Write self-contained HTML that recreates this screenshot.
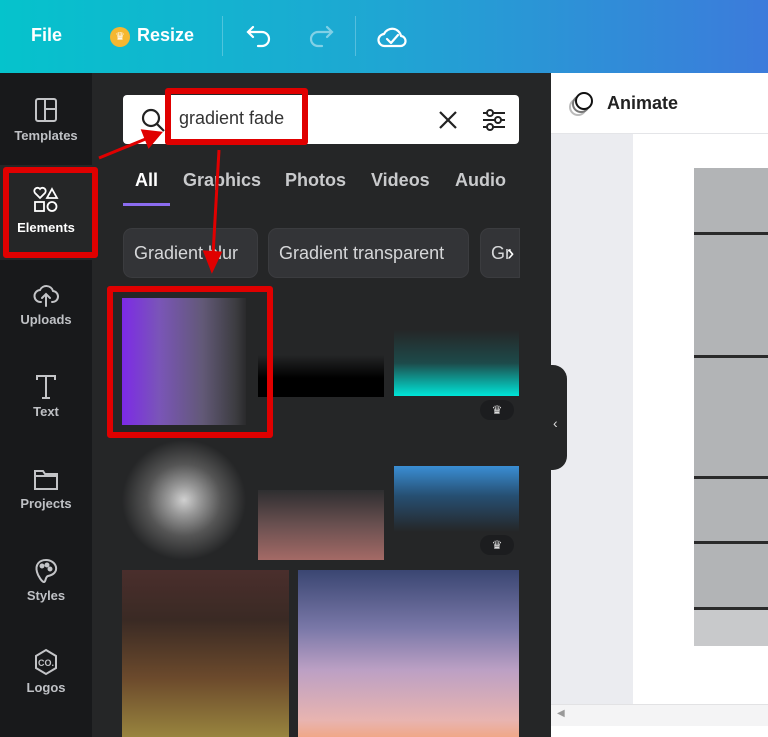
<!DOCTYPE html>
<html><head><meta charset="utf-8"><style>
*{margin:0;padding:0;box-sizing:border-box}
body{width:768px;height:737px;overflow:hidden;position:relative;font-family:"Liberation Sans",sans-serif;background:#ebecf0}
.a{position:absolute}
.top{left:0;top:0;width:768px;height:73px;background:linear-gradient(90deg,#05c3cc 0%,#1fa6d3 50%,#3c7bdb 100%)}
.tt{color:#fff;font-weight:bold;font-size:18px;top:25px}
.side{left:0;top:73px;width:92px;height:664px;background:#18191b}
.panel{left:92px;top:73px;width:459px;height:664px;background:#252627}
.lab{width:92px;text-align:center;color:#bfc1c5;font-size:13px;font-weight:bold;left:0}
.ico{left:31px;width:30px;height:30px}
.red{border:6px solid #e00000;border-radius:3px}
.tab{top:170px;color:#c9cacc;font-size:18px;font-weight:bold}
.chip{top:228px;height:50px;background:#333437;border-radius:9px;border:1px solid #3b3c3f;color:#d6d7d9;font-size:18px;line-height:48px;padding-left:10px;white-space:nowrap;overflow:hidden}
.crown{width:34px;height:20px;background:#1c1d1f;border-radius:10px;color:#ddd;font-size:12px;text-align:center;line-height:20px}
.ln{left:694px;width:74px;height:3px;background:#2a2a2a}
</style></head><body>
<div class="a top"></div>
<div class="a tt" style="left:31px">File</div>
<div class="a" style="left:110px;top:27px;width:20px;height:20px;border-radius:50%;background:#f5b730;color:#fff;font-size:11px;text-align:center;line-height:20px">♛</div>
<div class="a tt" style="left:137px">Resize</div>
<div class="a" style="left:222px;top:16px;width:1px;height:40px;background:rgba(255,255,255,.25)"></div>
<div class="a" style="left:355px;top:16px;width:1px;height:40px;background:rgba(255,255,255,.25)"></div>
<svg class="a" style="left:245px;top:24px" width="30" height="26" viewBox="0 0 30 26" fill="none" stroke="#fff" stroke-width="2.2" stroke-linecap="round"><path d="M8 3 3 8l5 5M3 8h14a7 7 0 0 1 0 14h-4"/></svg>
<svg class="a" style="left:305px;top:24px" width="30" height="26" viewBox="0 0 30 26" fill="none" stroke="rgba(255,255,255,.45)" stroke-width="2.2" stroke-linecap="round"><path d="M22 3l5 5-5 5M27 8H13a7 7 0 0 0 0 14h4"/></svg>
<svg class="a" style="left:376px;top:22px" width="32" height="28" viewBox="0 0 32 28" fill="none" stroke="#fff" stroke-width="2.2" stroke-linecap="round" stroke-linejoin="round"><path d="M9 24a6 6 0 0 1-1-12 9 9 0 0 1 17 2 5 5 0 0 1-1 10z"/><path d="M11 17l4 4 7-8"/></svg>

<div class="a side"></div>
<div class="a panel"></div>
<div class="a" style="left:0;top:165px;width:92px;height:95px;background:#252627"></div>
<svg class="a ico" style="top:95px" viewBox="0 0 30 30" fill="none" stroke="#c3c4c7" stroke-width="2"><rect x="5" y="4" width="20" height="22" rx="2"/><path d="M14 4v22M14 14h11"/></svg>
<div class="a lab" style="top:128px">Templates</div>
<svg class="a ico" style="top:185px" viewBox="0 0 30 30" fill="none" stroke="#fff" stroke-width="1.8"><path d="M9 13 4 8a3 3 0 0 1 5-4 3 3 0 0 1 5 4z"/><path d="M21 4l5 9h-10z"/><rect x="4" y="17" width="9" height="9"/><circle cx="21" cy="21.5" r="4.5"/></svg>
<div class="a lab" style="top:220px;color:#fff">Elements</div>
<svg class="a ico" style="top:280px" viewBox="0 0 30 30" fill="none" stroke="#c3c4c7" stroke-width="2" stroke-linecap="round"><path d="M10 22a6 6 0 0 1-1-12 7 7 0 0 1 13 1 5 5 0 0 1-1 11"/><path d="M15 26V14m-4 4 4-4 4 4"/></svg>
<div class="a lab" style="top:312px">Uploads</div>
<svg class="a ico" style="top:372px" viewBox="0 0 30 30" fill="none" stroke="#c3c4c7" stroke-width="2"><path d="M6 8V4h18v4M15 4v22M11 26h8"/></svg>
<div class="a lab" style="top:404px">Text</div>
<svg class="a ico" style="top:464px" viewBox="0 0 30 30" fill="none" stroke="#c3c4c7" stroke-width="2"><path d="M4 7h8l2 3h12v15H4z M4 12h22"/></svg>
<div class="a lab" style="top:496px">Projects</div>
<svg class="a ico" style="top:556px" viewBox="0 0 30 30" fill="none" stroke="#c3c4c7" stroke-width="2"><path d="M15 4C8 4 4 9 6 16c1 4 5 10 7 10s1-5 4-6c5-1 9-4 8-9-1-4-5-7-10-7z"/><circle cx="11" cy="10" r="1.5" fill="#c3c4c7"/><circle cx="16" cy="9" r="1.5" fill="#c3c4c7"/><circle cx="19" cy="13" r="1.5" fill="#c3c4c7"/></svg>
<div class="a lab" style="top:588px">Styles</div>
<svg class="a ico" style="top:647px" viewBox="0 0 30 30" fill="none" stroke="#c3c4c7" stroke-width="2"><path d="M15 3l10 6v12l-10 6-10-6V9z"/><text x="15" y="19" font-size="9" font-weight="bold" text-anchor="middle" fill="#c3c4c7" stroke="none" font-family="Liberation Sans">CO.</text></svg>
<div class="a lab" style="top:680px">Logos</div>
<div class="a red" style="left:3px;top:167px;width:95px;height:91px"></div>

<div class="a" style="left:123px;top:95px;width:396px;height:49px;background:#fff;border-radius:4px"></div>
<svg class="a" style="left:138px;top:105px" width="30" height="30" viewBox="0 0 30 30" fill="none" stroke="#222" stroke-width="2.2"><circle cx="13" cy="13" r="8"/><path d="M19 19l7 7"/></svg>
<div class="a" style="left:179px;top:108px;font-size:18px;color:#333">gradient fade</div>
<svg class="a" style="left:436px;top:108px" width="24" height="24" viewBox="0 0 24 24" stroke="#222" stroke-width="2.2"><path d="M4 4l16 16M20 4 4 20"/></svg>
<svg class="a" style="left:480px;top:106px" width="28" height="28" viewBox="0 0 28 28" fill="#fff" stroke="#222" stroke-width="2"><path d="M3 7h22M3 14h22M3 21h22"/><circle cx="10" cy="7" r="3"/><circle cx="18" cy="14" r="3"/><circle cx="10" cy="21" r="3"/></svg>
<div class="a red" style="left:165px;top:88px;width:143px;height:57px"></div>

<div class="a tab" style="left:135px;color:#fff">All</div>
<div class="a tab" style="left:183px">Graphics</div>
<div class="a tab" style="left:285px">Photos</div>
<div class="a tab" style="left:371px">Videos</div>
<div class="a tab" style="left:455px">Audio</div>
<div class="a" style="left:123px;top:203px;width:47px;height:3px;background:#8b6cf0"></div>

<div class="a chip" style="left:123px;width:135px">Gradient blur</div>
<div class="a chip" style="left:268px;width:201px">Gradient transparent</div>
<div class="a chip" style="left:480px;width:40px;border-radius:9px 0 0 9px">Gr</div>
<div class="a" style="left:507px;top:240px;color:#fff;font-size:22px">›</div>

<div class="a" style="left:122px;top:298px;width:124px;height:127px;background:linear-gradient(90deg,#7c2ae6,#7a55b8 30%,#625977 65%,#3c3c40 92%,#2a2a2c)"></div>
<div class="a" style="left:258px;top:355px;width:126px;height:42px;background:linear-gradient(180deg,#252627,#000 55%)"></div>
<div class="a" style="left:394px;top:330px;width:125px;height:66px;background:linear-gradient(180deg,#252627,#1d4a4a 50%,#00e5d8)"></div>
<div class="a crown" style="left:480px;top:400px">♛</div>
<div class="a" style="left:122px;top:440px;width:124px;height:120px;background:radial-gradient(ellipse 50% 50% at 50% 50%,#d0d0d0 0%,#999 25%,#555 60%,#252627 100%)"></div>
<div class="a" style="left:258px;top:490px;width:126px;height:70px;background:linear-gradient(180deg,#2e2e30,#6a5050 50%,#a46a66)"></div>
<div class="a" style="left:394px;top:466px;width:125px;height:66px;background:linear-gradient(180deg,#3a8ed4,#264f72 45%,#252627)"></div>
<div class="a crown" style="left:480px;top:535px">♛</div>
<div class="a" style="left:122px;top:570px;width:167px;height:167px;background:linear-gradient(180deg,#4a2e2c,#3a2a24 30%,#6c4a2c 65%,#98843e)"></div>
<div class="a" style="left:298px;top:570px;width:221px;height:167px;background:linear-gradient(180deg,#3a4672,#7a78a8 35%,#bca0c4 60%,#e8b4b0 90%,#f0a888)"></div>
<div class="a red" style="left:107px;top:286px;width:166px;height:152px"></div>

<svg class="a" style="left:0;top:0" width="768" height="737"><g stroke="#e00000" stroke-width="3" fill="#e00000"><line x1="99" y1="158" x2="148" y2="138"/><path d="M160 133 143 131 149 146z"/><line x1="219" y1="150" x2="213" y2="255"/><path d="M212 270 205 252 220 253z"/></g></svg>

<div class="a" style="left:551px;top:73px;width:217px;height:61px;background:#fff;border-bottom:1px solid #e4e5e8"></div>
<svg class="a" style="left:567px;top:90px" width="30" height="28" viewBox="0 0 30 28" fill="none" stroke-width="2"><circle cx="11" cy="17" r="8" stroke="#bbb"/><circle cx="14" cy="14" r="8" stroke="#777"/><circle cx="17" cy="11" r="8" stroke="#111" fill="#fff"/></svg>
<div class="a" style="left:607px;top:93px;font-size:18px;font-weight:bold;color:#222">Animate</div>
<div class="a" style="left:633px;top:134px;width:135px;height:570px;background:#fff"></div>
<div class="a" style="left:694px;top:168px;width:74px;height:478px;background:#b2b4b6"></div>
<div class="a ln" style="top:232px"></div>
<div class="a ln" style="top:355px"></div>
<div class="a ln" style="top:476px"></div>
<div class="a ln" style="top:541px"></div>
<div class="a ln" style="top:607px"></div>
<div class="a" style="left:694px;top:610px;width:74px;height:36px;background:#c8c9cb"></div>
<div class="a" style="left:551px;top:704px;width:217px;height:22px;background:#f4f4f5;border-top:1px solid #e2e2e4"></div>
<div class="a" style="left:557px;top:708px;color:#999;font-size:10px">◀</div>
<div class="a" style="left:551px;top:726px;width:217px;height:11px;background:#fff"></div>
<div class="a" style="left:549px;top:365px;width:18px;height:105px;background:#252627;border-radius:0 14px 14px 0"></div>
<div class="a" style="left:553px;top:415px;color:#ddd;font-size:14px">‹</div>
</body></html>
